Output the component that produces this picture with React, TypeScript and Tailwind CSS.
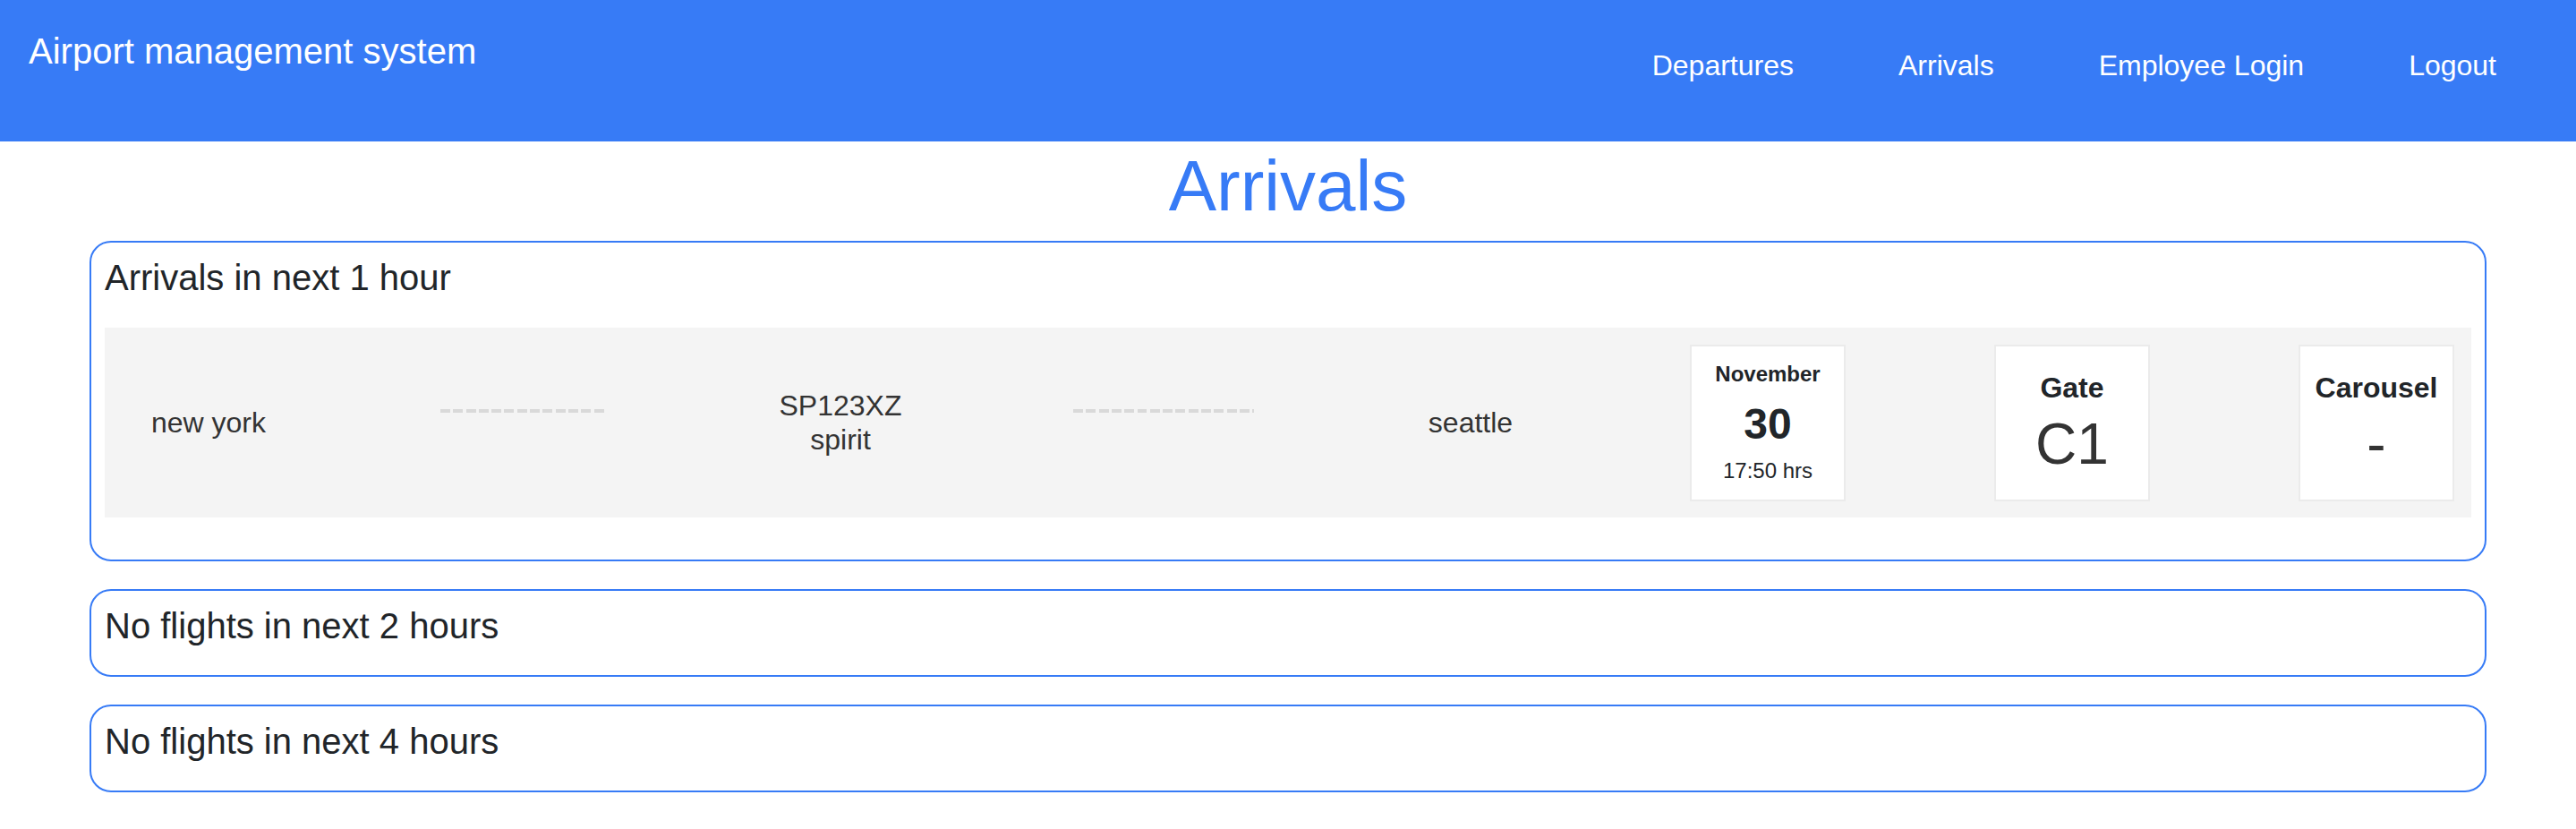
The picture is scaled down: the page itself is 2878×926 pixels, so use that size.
const font = { fontFamily: '"Liberation Sans", Arial, sans-serif' };

function NavLink({ label }: { label: string }) {
  return (
    <a className="text-[32px] leading-[48px] text-white cursor-pointer">{label}</a>
  );
}

function Dashes({ width, gap }: { width: string; gap: string }) {
  return (
    <div
      className={`${width} ${gap} mb-[26px] h-[4px] shrink-0 bg-[repeating-linear-gradient(to_right,#d9d9d9_0px,#d9d9d9_11px,transparent_11px,transparent_14.3px)]`}
      aria-hidden="true"
    />
  );
}

function InfoBox({ title, value, ml }: { title: string; value: string; ml: string }) {
  return (
    <div
      className={`${ml} flex h-[175px] w-[174px] shrink-0 flex-col items-center border-2 border-[#ebebeb] bg-white pt-[27px] text-[#333]`}
    >
      <p className="text-[32px] font-bold leading-[38px] text-[#212529]">{title}</p>
      <p className="mt-[6px] text-[64px] leading-[77px]">{value}</p>
    </div>
  );
}

function FlightRow() {
  return (
    <section className="mt-8 mb-8 flex h-[212px] items-center bg-[#f4f4f4] text-[32px] leading-[38px] text-[#333]">
      <p className="w-[232px] shrink-0 text-center">new york</p>
      <Dashes width="w-[186px]" gap="ml-[143px]" />
      <div className="ml-[151px] w-[220px] shrink-0 text-center">
        <p>SP123XZ</p>
        <p>spirit</p>
      </div>
      <Dashes width="w-[202px]" gap="ml-[150px]" />
      <p className="ml-[132px] w-[220px] shrink-0 text-center">seattle</p>

      <div className="ml-[135px] flex h-[175px] w-[174px] shrink-0 flex-col items-center border-2 border-[#ebebeb] bg-white pt-[16px] text-[#212529]">
        <p className="text-[24px] font-bold leading-[29px]">November</p>
        <p className="mt-[13px] text-[48px] font-bold leading-[58px]">30</p>
        <p className="mt-[8px] text-[24px] leading-[29px]">17:50 hrs</p>
      </div>
      <InfoBox title="Gate" value="C1" ml="ml-[166px]" />
      <InfoBox title="Carousel" value="-" ml="ml-[166px]" />
    </section>
  );
}

function HourCard({ title, children }: { title: string; children?: React.ReactNode }) {
  return (
    <article className="rounded-[24px] border-2 border-[#377bf6] px-[15px] pt-[15px] pb-[15px]">
      <h5 className="mb-4 text-[40px] leading-[48px] text-[#212529]">{title}</h5>
      {children}
    </article>
  );
}

export default function App() {
  return (
    <div className="min-h-screen bg-white" style={font}>
      <header className="flex h-[158px] items-start justify-between bg-[#377bf6] pr-[89px] pl-[32px]">
        <a className="mt-[33px] text-[40px] leading-[48px] text-white">Airport management system</a>
        <nav className="mt-[49px] flex gap-[117px]">
          <NavLink label="Departures" />
          <NavLink label="Arrivals" />
          <NavLink label="Employee Login" />
          <NavLink label="Logout" />
        </nav>
      </header>

      <main className="px-[100px]">
        <h1 className="mt-[2px] mb-[13px] text-center text-[80px] leading-[96px] text-[#377bf6]">Arrivals</h1>

        <div className="flex flex-col gap-[31px]">
          <HourCard title="Arrivals in next 1 hour">
            <FlightRow />
          </HourCard>
          <HourCard title="No flights in next 2 hours" />
          <HourCard title="No flights in next 4 hours" />
        </div>
      </main>
    </div>
  );
}
